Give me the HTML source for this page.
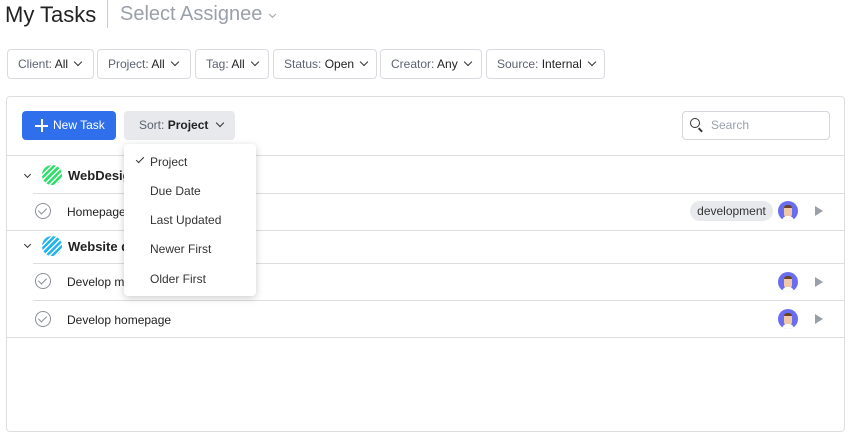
<!DOCTYPE html>
<html><head><style>
*{box-sizing:border-box;margin:0;padding:0}
body{width:850px;height:438px;background:#fff;font-family:"Liberation Sans",sans-serif;position:relative;overflow:hidden;color:#222}
.a{position:absolute}
.f{position:absolute;top:49px;height:30px;border:1px solid #d9dbe0;border-radius:4px;font-size:12px;color:#5b6270;line-height:28px;padding-left:10px;white-space:nowrap}
.f b{font-weight:normal;color:#222}
.chev{display:inline-block;width:6px;height:6px;border-right:1.5px solid #333;border-bottom:1.5px solid #333;transform:rotate(45deg);margin-left:7px;position:relative;top:-3px}
.line{position:absolute;height:1px;background:#dcdee2}
.chk{position:absolute;width:16px;height:16px;border:1.5px solid #8a8f98;border-radius:50%}
.chk:after{content:"";position:absolute;left:4px;top:2px;width:4px;height:7px;border-right:1.5px solid #8a8f98;border-bottom:1.5px solid #8a8f98;transform:rotate(45deg)}
.t{position:absolute;font-size:12px;color:#222}
.av{position:absolute;width:20px;height:20px;border-radius:50%;background:#6a6df0;overflow:hidden}
.av:before{content:"";position:absolute;left:6px;top:4px;width:8px;height:10px;background:#f2c9a6;border-radius:3px 3px 4px 4px;border-top:3px solid #6b4226}
.av:after{content:"";position:absolute;left:4px;top:15px;width:12px;height:8px;background:#fff;border-radius:5px 5px 0 0}
.pl{position:absolute;width:0;height:0;border-left:8px solid #9aa0a8;border-top:5px solid transparent;border-bottom:5px solid transparent}
.ic{position:absolute;width:20px;height:20px;border-radius:50%}
.dd{position:absolute;font-size:12px;color:#333}
</style></head><body>
<div class="a" style="left:5px;top:2px;font-size:22px;color:#222">My Tasks</div>
<div class="a" style="left:107px;top:0;width:1px;height:28px;background:#ccc"></div>
<div class="a" style="left:120px;top:3px;font-size:20px;color:#9aa0aa">Select Assignee <span class="chev" style="border-color:#9aa0aa;width:5px;height:5px;margin-left:2px"></span></div>

<div class="f" style="left:7px;width:87px">Client: <b>All</b><span class="chev"></span></div>
<div class="f" style="left:97px;width:94px">Project: <b>All</b><span class="chev"></span></div>
<div class="f" style="left:195px;width:74px">Tag: <b>All</b><span class="chev"></span></div>
<div class="f" style="left:273px;width:104px">Status: <b>Open</b><span class="chev"></span></div>
<div class="f" style="left:380px;width:102px">Creator: <b>Any</b><span class="chev"></span></div>
<div class="f" style="left:486px;width:119px">Source: <b>Internal</b><span class="chev"></span></div>

<div class="a" style="left:6px;top:96px;width:839px;height:336px;border:1px solid #dcdee2;border-radius:4px"></div>

<div class="a" style="left:22px;top:111px;width:94px;height:29px;background:#2f6fec;border-radius:4px;color:#fff;font-size:12px;line-height:29px;padding-left:31px">New Task</div>
<div class="a" style="left:35px;top:119px;width:13px;height:1.6px;background:#fff;top:125px"></div>
<div class="a" style="left:41px;top:119px;width:1.6px;height:13px;background:#fff"></div>
<div class="a" style="left:124px;top:111px;width:111px;height:29px;background:#e8e9ec;border-radius:4px;font-size:12px;line-height:29px;padding-left:15px;color:#5b6270">Sort: <b style="color:#222">Project</b><span class="chev" style="margin-left:9px"></span></div>

<div class="a" style="left:682px;top:111px;width:148px;height:29px;border:1px solid #d4d6db;border-radius:4px;font-size:12px;color:#9aa0aa;line-height:27px;padding-left:28px">Search</div>
<div class="a" style="left:690px;top:118px;width:10px;height:10px;border:1.6px solid #333;border-radius:50%"></div>
<div class="a" style="left:698px;top:129px;width:5px;height:1.6px;background:#333;transform:rotate(45deg)"></div>

<div class="line" style="left:7px;width:837px;top:155px"></div>
<div class="line" style="left:33px;width:811px;top:193px"></div>
<div class="line" style="left:7px;width:837px;top:230px"></div>
<div class="line" style="left:33px;width:811px;top:263px"></div>
<div class="line" style="left:33px;width:811px;top:300px"></div>
<div class="line" style="left:7px;width:837px;top:337px"></div>

<span class="chev" style="position:absolute;left:25px;top:172px;margin:0;width:5px;height:5px"></span>
<div class="ic" style="left:42px;top:165px;background:repeating-linear-gradient(135deg,#2ee06a 0 2.5px,#fff 2.5px 4px)"></div>
<div class="t" style="left:68px;top:168px;font-weight:bold;font-size:13px">WebDesign</div>
<div class="chk" style="left:35px;top:203px"></div>
<div class="t" style="left:67px;top:205px">Homepage</div>
<div class="a" style="left:690px;top:201px;width:83px;height:20px;background:#e8e9ec;border-radius:10px;font-size:12px;line-height:20px;text-align:center;color:#333">development</div>
<div class="av" style="left:778px;top:201px"></div>
<div class="pl" style="left:815px;top:206px"></div>

<span class="chev" style="position:absolute;left:25px;top:242px;margin:0;width:5px;height:5px"></span>
<div class="ic" style="left:42px;top:236px;background:repeating-linear-gradient(135deg,#22b3f0 0 2.5px,#fff 2.5px 4px)"></div>
<div class="t" style="left:68px;top:239px;font-weight:bold;font-size:13px">Website design</div>
<div class="chk" style="left:35px;top:273px"></div>
<div class="t" style="left:67px;top:275px">Develop main page</div>
<div class="av" style="left:778px;top:272px"></div>
<div class="pl" style="left:815px;top:277px"></div>
<div class="chk" style="left:35px;top:311px"></div>
<div class="t" style="left:67px;top:313px">Develop homepage</div>
<div class="av" style="left:778px;top:309px"></div>
<div class="pl" style="left:815px;top:314px"></div>

<div class="a" style="left:124px;top:144px;width:132px;height:152px;background:#fff;border-radius:4px;box-shadow:0 2px 8px rgba(0,0,0,.2)"></div>
<div class="a" style="left:138px;top:155px;width:4px;height:8px;border-right:1.5px solid #333;border-bottom:1.5px solid #333;transform:rotate(45deg)"></div>
<div class="dd" style="left:150px;top:155px">Project</div>
<div class="dd" style="left:150px;top:184px">Due Date</div>
<div class="dd" style="left:150px;top:213px">Last Updated</div>
<div class="dd" style="left:150px;top:242px">Newer First</div>
<div class="dd" style="left:150px;top:272px">Older First</div>
</body></html>
